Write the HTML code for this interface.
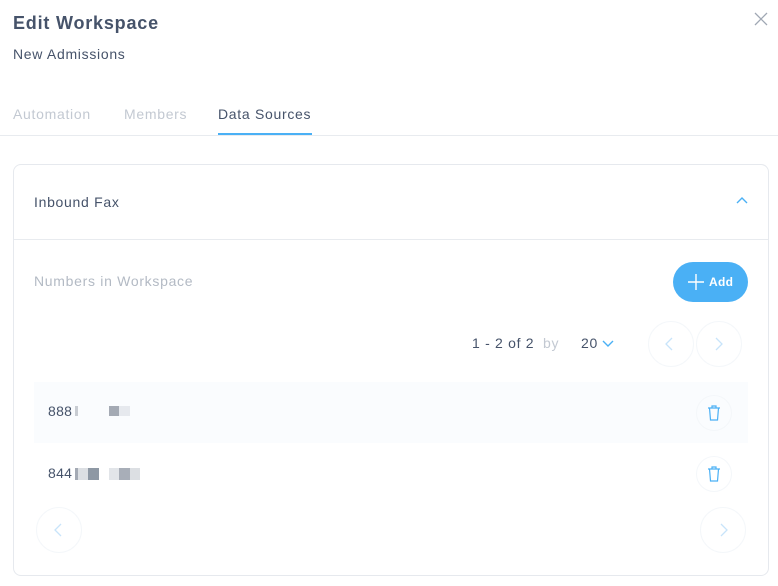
<!DOCTYPE html>
<html><head><style>
*{box-sizing:border-box;margin:0;padding:0}
body{width:778px;height:586px;background:#fff;font-family:"Liberation Sans",sans-serif;position:relative;overflow:hidden;color:#44516a;letter-spacing:0.7px}
.a{position:absolute}
.circ{position:absolute;border:1px solid #f4f7fa;border-radius:50%;width:36px;height:36px}
</style></head><body>
<div class="a" style="left:13px;top:13px;font-size:18px;font-weight:bold;color:#46536a;letter-spacing:0.8px">Edit Workspace</div>
<div class="a" style="left:13px;top:46px;font-size:14px;color:#46536a">New Admissions</div>
<svg class="a" style="left:754px;top:12px" width="14" height="14"><path d="M1 1L13 13M13 1L1 13" stroke="#a0a8b4" stroke-width="1.3"/></svg>
<div class="a" style="left:13px;top:106px;font-size:14px;color:#c3c9d2">Automation</div>
<div class="a" style="left:124px;top:106px;font-size:14px;color:#c3c9d2">Members</div>
<div class="a" style="left:218px;top:106px;font-size:14px;color:#46536a">Data Sources</div>
<div class="a" style="left:218px;top:133px;width:94px;height:2px;background:#4ab0f5"></div>
<div class="a" style="left:0;top:135px;width:778px;height:1px;background:#e8ebef"></div>
<div class="a" style="left:13px;top:164px;width:756px;height:412px;border:1px solid #e6e9ee;border-radius:8px"></div>
<div class="a" style="left:34px;top:194px;font-size:14px;color:#46536a">Inbound Fax</div>
<svg class="a" style="left:736px;top:197px" width="12" height="8"><path d="M1 6L6 1L11 6" stroke="#4ab0f5" stroke-width="1.4" fill="none"/></svg>
<div class="a" style="left:14px;top:239px;width:754px;height:1px;background:#e8ebef"></div>
<div class="a" style="left:34px;top:273px;font-size:14px;color:#b3bac4">Numbers in Workspace</div>
<div class="a" style="left:673px;top:262px;width:75px;height:40px;border-radius:20px;background:#4ab0f5;color:#fff;font-size:12px;font-weight:bold;letter-spacing:0.3px">
<svg class="a" style="left:14px;top:11px" width="18" height="18"><path d="M9 1V17M1 9H17" stroke="#fff" stroke-width="1.4"/></svg>
<span class="a" style="left:36px;top:13px">Add</span></div>
<div class="a" style="left:472px;top:335px;font-size:14px;color:#46536a">1 - 2 of 2</div>
<div class="a" style="left:543px;top:335px;font-size:14px;color:#c3c9d2">by</div>
<div class="a" style="left:581px;top:335px;font-size:14px;color:#46536a">20</div>
<svg class="a" style="left:602px;top:340px" width="12" height="8"><path d="M1 1L6 6L11 1" stroke="#4ab0f5" stroke-width="1.4" fill="none"/></svg>
<div class="circ" style="left:648px;top:321px;width:46px;height:46px"></div>
<div class="circ" style="left:696px;top:321px;width:46px;height:46px"></div>
<svg class="a" style="left:665px;top:337px" width="8" height="14"><path d="M7 1L1 7L7 13" stroke="#c8e4fa" stroke-width="1.3" fill="none"/></svg>
<svg class="a" style="left:715px;top:337px" width="8" height="14"><path d="M1 1L7 7L1 13" stroke="#c8e4fa" stroke-width="1.3" fill="none"/></svg>
<div class="a" style="left:34px;top:382px;width:714px;height:61px;background:#fafcfe"></div>
<div class="a" style="left:48px;top:403px;font-size:14px;color:#46536a;letter-spacing:0.3px">888</div>
<div class="a" style="left:75px;top:406px;width:3px;height:10px;background:#c8ccd2"></div>
<div class="a" style="left:109px;top:406px;width:10px;height:10px;background:#a4aab4"></div>
<div class="a" style="left:119px;top:406px;width:11px;height:10px;background:#e6e9ee"></div>
<div class="a" style="left:48px;top:465px;font-size:14px;color:#46536a;letter-spacing:0.3px">844</div>
<div class="a" style="left:75px;top:468px;width:3px;height:12px;background:#a4aab4"></div>
<div class="a" style="left:78px;top:468px;width:10px;height:12px;background:#dcdfe3"></div>
<div class="a" style="left:88px;top:468px;width:11px;height:12px;background:#8e98a4"></div>
<div class="a" style="left:109px;top:468px;width:10px;height:12px;background:#e2e5e9"></div>
<div class="a" style="left:119px;top:468px;width:11px;height:12px;background:#a8aeb8"></div>
<div class="a" style="left:130px;top:468px;width:10px;height:12px;background:#dcdfe3"></div>
<div class="circ" style="left:696px;top:395px"></div>
<div class="circ" style="left:696px;top:456px"></div>
<svg class="a" style="left:706px;top:404px" width="16" height="18"><path d="M2 4H14M6 4V2H10V4M3.5 4L4.5 16H11.5L12.5 4" stroke="#4ab0f5" stroke-width="1.2" fill="none"/></svg>
<svg class="a" style="left:706px;top:465px" width="16" height="18"><path d="M2 4H14M6 4V2H10V4M3.5 4L4.5 16H11.5L12.5 4" stroke="#4ab0f5" stroke-width="1.2" fill="none"/></svg>
<div class="circ" style="left:36px;top:507px;width:46px;height:46px"></div>
<div class="circ" style="left:700px;top:507px;width:46px;height:46px"></div>
<svg class="a" style="left:54px;top:523px" width="8" height="14"><path d="M7 1L1 7L7 13" stroke="#c8e4fa" stroke-width="1.3" fill="none"/></svg>
<svg class="a" style="left:720px;top:523px" width="8" height="14"><path d="M1 1L7 7L1 13" stroke="#c8e4fa" stroke-width="1.3" fill="none"/></svg>
</body></html>
